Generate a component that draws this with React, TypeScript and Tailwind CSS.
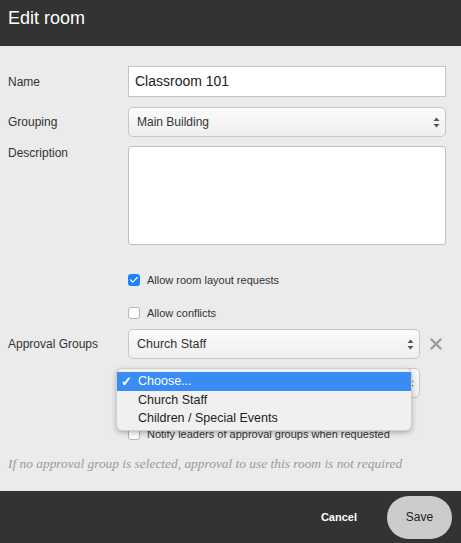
import { Check } from "lucide-react"

const sans = { fontFamily: '"Liberation Sans", Arial, sans-serif' }

function SelectArrows() {
  return (
    <svg width="7" height="11" viewBox="0 0 7 11" className="shrink-0">
      <path d="M3.5 0.5 L6.5 4 L0.5 4 Z" fill="#555" />
      <path d="M3.5 10.5 L6.5 7 L0.5 7 Z" fill="#555" />
    </svg>
  )
}

function SelectBox({ value, className = "", textClass = "text-[12px]" }: { value: string; className?: string; textClass?: string }) {
  return (
    <div
      className={`flex h-[30px] items-center justify-between rounded-[5px] border border-[#c6c6c6] bg-gradient-to-b from-[#fbfbfb] to-[#efefef] pl-[8px] pr-[5px] text-[#333] ${className}`}
    >
      <span className={textClass}>{value}</span>
      <SelectArrows />
    </div>
  )
}

function Checkbox({ checked, label }: { checked?: boolean; label: string }) {
  return (
    <div className="flex h-[16px] items-center gap-[7px]">
      {checked ? (
        <span className="flex h-[12px] w-[12px] items-center justify-center rounded-[3px] bg-[#1c84fb]">
          <Check className="h-[10px] w-[10px] text-white" strokeWidth={3} />
        </span>
      ) : (
        <span className="h-[12px] w-[12px] rounded-[3px] border border-[#b5b5b5] bg-white" />
      )}
      <span className="text-[11px] text-[#333]">{label}</span>
    </div>
  )
}

export default function App() {
  return (
    <div className="w-[461px] h-[543px] bg-[#ebebeb] flex flex-col" style={sans}>
      <header className="h-[46px] bg-[#333333] pl-[8px] pt-[7px]">
        <h1 className="text-[18px] leading-[22px] text-white">Edit room</h1>
      </header>

      <div className="flex-1 pl-[8px] pr-[15px] pt-[20px]">
        <div className="flex items-center">
          <label className="w-[120px] text-[12px] text-[#333]">Name</label>
          <div className="flex h-[31px] flex-1 items-center border border-[#c4c4c4] bg-white pl-[6px] text-[14px] text-[#222]">
            Classroom 101
          </div>
        </div>

        <div className="mt-[10px] flex items-center">
          <label className="w-[120px] text-[12px] text-[#333]">Grouping</label>
          <SelectBox value="Main Building" className="flex-1" />
        </div>

        <div className="mt-[9px] flex items-start">
          <label className="w-[120px] text-[12px] leading-[14px] text-[#333]">Description</label>
          <div className="h-[99px] flex-1 rounded-[3px] border border-[#bfbfbf] bg-white" />
        </div>

        <div className="ml-[120px] mt-[27px]">
          <Checkbox checked label="Allow room layout requests" />
        </div>
        <div className="ml-[120px] mt-[17px]">
          <Checkbox label="Allow conflicts" />
        </div>

        <div className="mt-[8px] flex items-center">
          <label className="w-[120px] text-[12px] text-[#333]">Approval Groups</label>
          <SelectBox value="Church Staff" className="w-[292px]" textClass="text-[12.5px]" />
          <svg width="12" height="12" viewBox="0 0 12 12" className="ml-[10px]">
            <path d="M1.5 1.5 L10.5 10.5 M10.5 1.5 L1.5 10.5" stroke="#9a9a9a" strokeWidth="2.4" strokeLinecap="round" />
          </svg>
        </div>

        <div className="relative ml-[120px] mt-[9px] w-[292px]">
          <SelectBox value="" />
          {/* native select popup */}
          <div className="absolute left-[-11px] top-[1px] w-[294px] rounded-[5px] bg-[#f0f0f0] py-[3px] text-[12.5px] text-[#222] shadow-[0_2px_6px_rgba(0,0,0,0.35)] ring-1 ring-[#cfcfcf]">
            <div className="flex h-[19px] items-center bg-[#3a8cf5] text-white">
              <span className="w-[21px] pl-[4px] text-[13px] font-bold">✓</span>
              <span>Choose...</span>
            </div>
            <div className="flex h-[18px] items-center pl-[21px]">Church Staff</div>
            <div className="flex h-[18px] items-center pl-[21px]">Children / Special Events</div>
          </div>
        </div>

        <div className="ml-[120px] mt-[28px]">
          <Checkbox label="Notify leaders of approval groups when requested" />
        </div>

        <p
          className="mt-[14px] text-[13.4px] leading-[16px] italic text-[#9a9a9a]"
          style={{ fontFamily: '"Liberation Serif", Georgia, serif' }}
        >
          If no approval group is selected, approval to use this room is not required
        </p>
      </div>

      <footer className="flex h-[52px] items-center justify-end bg-[#333333] pr-[9px]">
        <button className="mr-[30px] text-[11px] font-bold text-white">Cancel</button>
        <button className="h-[43px] w-[65px] rounded-[22px] bg-[#cccccc] text-[12px] text-[#222]">Save</button>
      </footer>
    </div>
  )
}
